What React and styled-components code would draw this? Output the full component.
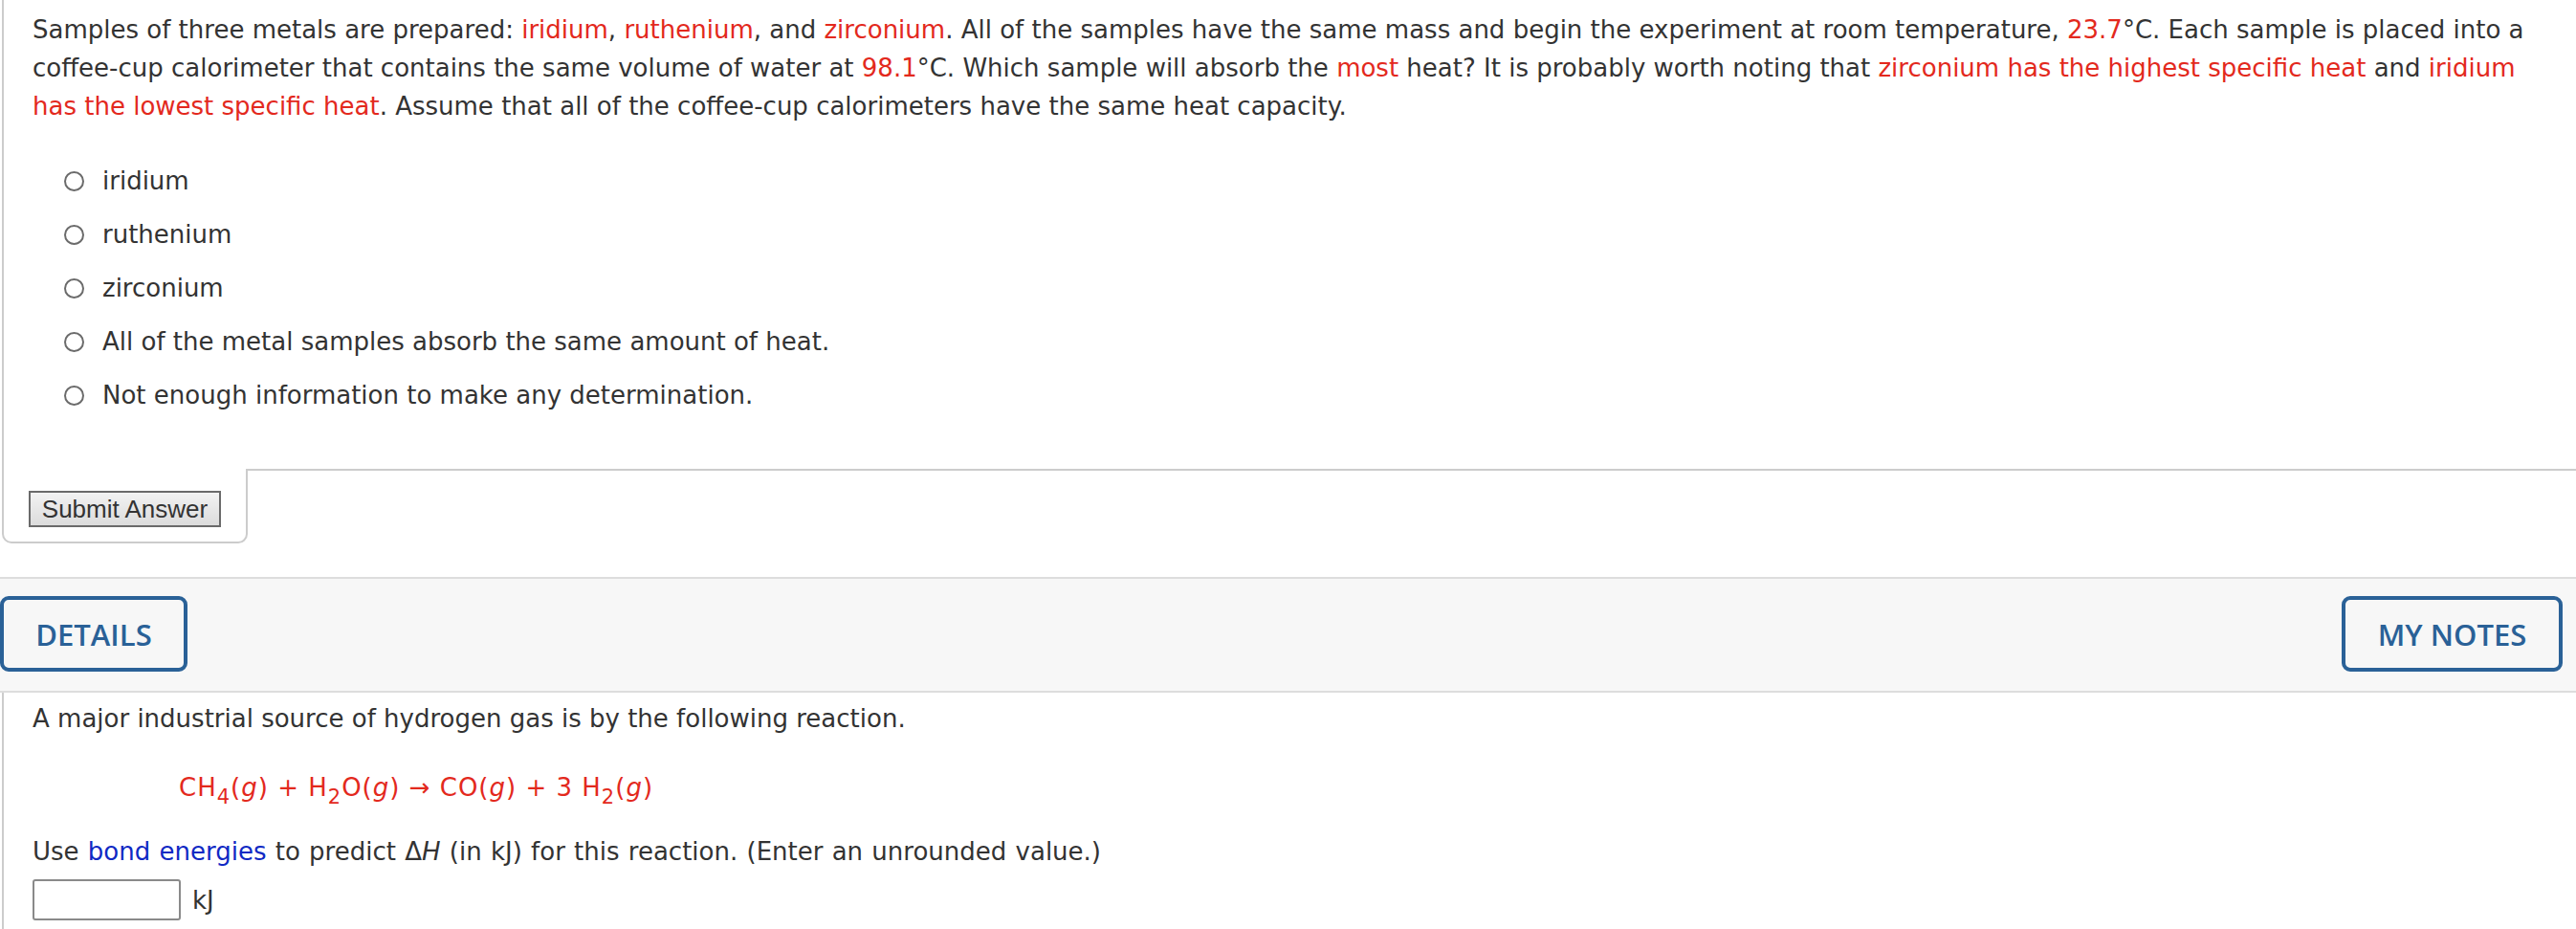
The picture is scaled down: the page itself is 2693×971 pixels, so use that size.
import React from "react";
import styled, { createGlobalStyle } from "styled-components";

const red = "#e3291d";
const ink = "#333333";
const blue = "#2a6197";

const GlobalStyle = createGlobalStyle`
  body {
    margin: 0;
    background: #ffffff;
    font-family: "DejaVu Sans", Verdana, sans-serif;
    color: ${ink};
  }
`;

const Page = styled.div`
  width: 2693px;
  padding-left: 2px;
  box-sizing: border-box;
`;

const QuestionBody = styled.div`
  border-left: 2px solid #cccccc;
  padding: 11px 20px 49px 30px;
`;

const Prompt = styled.p`
  margin: 0;
  font-size: 26px;
  line-height: 40px;
`;

const Hot = styled.span`
  color: ${red};
`;

const Options = styled.div`
  margin-top: 30px;
  display: flex;
  flex-direction: column;
`;

const Option = styled.label`
  height: 56px;
  display: flex;
  align-items: center;
  gap: 19px;
  padding-left: 33px;
  font-size: 26px;
`;

const Radio = styled.span`
  width: 17px;
  height: 17px;
  border: 2px solid #6b6b6b;
  border-radius: 50%;
  background: #fff;
  flex: none;
`;

const Footer = styled.div`
  display: flex;
`;

const SubmitCell = styled.div`
  width: 257px;
  height: 78px;
  box-sizing: border-box;
  border: 2px solid #cccccc;
  border-top: none;
  border-radius: 0 0 10px 10px;
  padding: 23px 0 0 26px;
  margin-right: -2px;
`;

const Filler = styled.div`
  flex: 1;
  border-top: 2px solid #cccccc;
`;

const SubmitButton = styled.button`
  width: 201px;
  height: 38px;
  border: 2px solid #6a6a6a;
  border-radius: 0;
  background: linear-gradient(#f2f2f2, #dcdcdc);
  font-family: "Liberation Sans", Arial, sans-serif;
  font-size: 26px;
  color: #333;
  padding: 0;
`;

const Band = styled.div`
  margin: 35px 0 0 -2px;
  height: 121px;
  box-sizing: border-box;
  border-top: 2px solid #dddddd;
  border-bottom: 2px solid #dddddd;
  background: #f7f7f7;
  display: flex;
  justify-content: space-between;
  align-items: flex-start;
  padding: 18px 14px 0 0;
`;

const PillButton = styled.button`
  width: ${(p) => p.w}px;
  height: 79px;
  border: 4px solid ${blue};
  border-radius: 9px;
  background: #f7f7f7;
  color: ${blue};
  font-family: "Open Sans", sans-serif;
  font-weight: 600;
  font-size: 31px;
  padding: 0;
`;

const LowerBody = styled.div`
  border-left: 2px solid #cccccc;
  padding: 7px 20px 20px 30px;
  font-size: 26px;
  line-height: 40px;
`;

const Line = styled.p`
  margin: ${(p) => p.mt || 0}px 0 0 0;
  word-spacing: ${(p) => p.ws || 0}px;
`;

const Equation = styled.p`
  margin: 32px 0 0 153px;
  color: ${red};
  letter-spacing: 1px;
  sub {
    font-size: 21px;
    line-height: 0;
    vertical-align: -8px;
  }
`;

const Link = styled.span`
  color: #1029c4;
`;

const AnswerRow = styled.div`
  margin-top: 9px;
  display: flex;
  align-items: center;
  gap: 12px;
`;

const AnswerInput = styled.input`
  width: 151px;
  height: 39px;
  border: 2px solid #8a8a8a;
  border-radius: 3px;
  padding: 0;
  background: #fff;
`;

const options = [
  "iridium",
  "ruthenium",
  "zirconium",
  "All of the metal samples absorb the same amount of heat.",
  "Not enough information to make any determination.",
];

export default function App() {
  return (
    <Page>
      <GlobalStyle />
      <QuestionBody>
        <Prompt>
          Samples of three metals are prepared: <Hot>iridium</Hot>, <Hot>ruthenium</Hot>, and{" "}
          <Hot>zirconium</Hot>. All of the samples have the same mass and begin the experiment at
          room temperature, <Hot>23.7</Hot>°C. Each sample is placed into a coffee-cup calorimeter
          that contains the same volume of water at <Hot>98.1</Hot>°C. Which sample will absorb the{" "}
          <Hot>most</Hot> heat? It is probably worth noting that{" "}
          <Hot>zirconium has the highest specific heat</Hot> and{" "}
          <Hot>iridium has the lowest specific heat</Hot>. Assume that all of the coffee-cup
          calorimeters have the same heat capacity.
        </Prompt>
        <Options>
          {options.map((o) => (
            <Option key={o}>
              <Radio />
              {o}
            </Option>
          ))}
        </Options>
      </QuestionBody>
      <Footer>
        <SubmitCell>
          <SubmitButton>Submit Answer</SubmitButton>
        </SubmitCell>
        <Filler />
      </Footer>
      <Band>
        <PillButton w={196}>DETAILS</PillButton>
        <PillButton w={231}>MY NOTES</PillButton>
      </Band>
      <LowerBody>
        <Line>A major industrial source of hydrogen gas is by the following reaction.</Line>
        <Equation>
          CH<sub>4</sub>(<i>g</i>) + H<sub>2</sub>O(<i>g</i>) → CO(<i>g</i>) + 3 H<sub>2</sub>(<i>g</i>)
        </Equation>
        <Line mt={27} ws={1}>
          Use <Link>bond energies</Link> to predict Δ<i>H</i> (in kJ) for this reaction. (Enter an
          unrounded value.)
        </Line>
        <AnswerRow>
          <AnswerInput />
          kJ
        </AnswerRow>
      </LowerBody>
    </Page>
  );
}
